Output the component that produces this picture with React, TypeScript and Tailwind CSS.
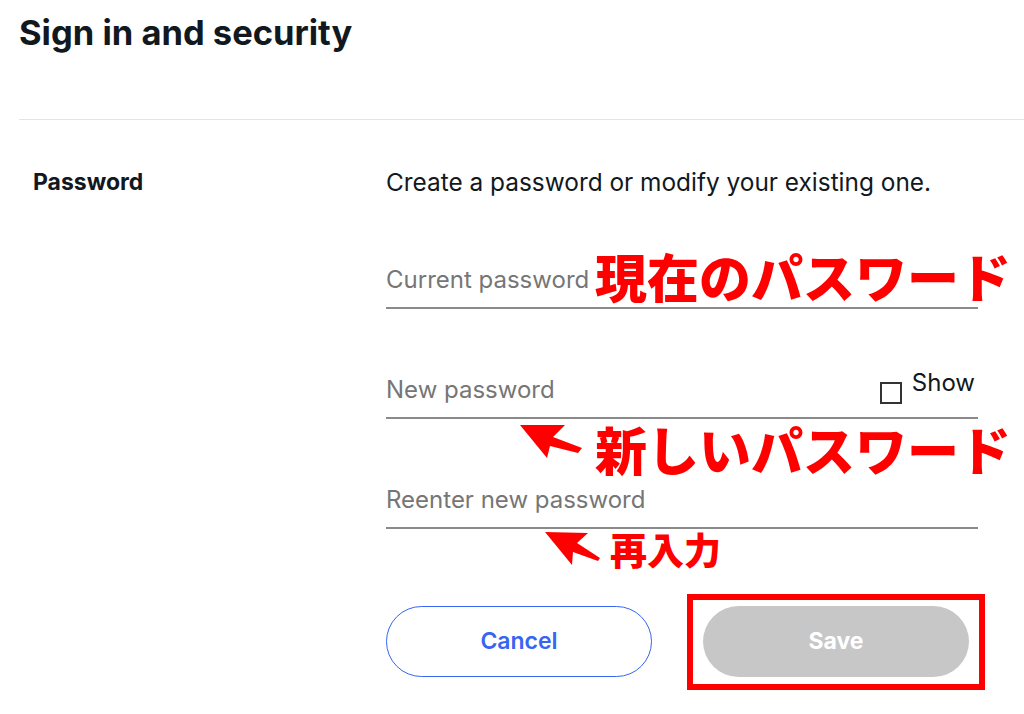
import React, { useState } from "react";

const UI_FONT = "font-['Inter','Liberation_Sans',sans-serif]";
const JP_FONT = "font-['Noto_Sans_CJK_JP','Noto_Sans',sans-serif]";

type FieldProps = {
  label: string;
  extra?: React.ReactNode;
};

const Field: React.FC<FieldProps> = ({ label, extra }) => (
  <div className="w-[592px] border-b-2 border-[#8a8a8a] pb-[13px]">
    <div className="flex items-start justify-between">
      <span className="text-[24px] leading-[28px] text-[#767676]">{label}</span>
      {extra}
    </div>
  </div>
);

// red arrow that points up and to the left
const Arrow: React.FC<{ className: string; points: string; w: number; h: number }> = ({
  className,
  points,
  w,
  h,
}) => (
  <svg className={className} width={w} height={h} viewBox={`0 0 ${w} ${h}`}>
    <polygon points={points} fill="#ff0000" />
  </svg>
);

const App: React.FC = () => {
  const [show, setShow] = useState(false);

  return (
    <div className={`relative w-[1024px] h-[714px] overflow-hidden bg-white ${UI_FONT}`}>
      <div className="pl-[19px] pt-[13px]">
        <h1 className="text-[34.5px] leading-[40px] font-bold text-[#111820]">Sign in and security</h1>
      </div>
      <div className="ml-[19px] mt-[66px] h-px bg-[#e5e5e5]" />

      <div className="mt-[48px] flex pl-[33px]">
        <div className="w-[353px] shrink-0">
          <h2 className="text-[23px] leading-[28px] font-bold text-[#111820]">Password</h2>
        </div>

        <div className="flex flex-col">
          <p className="text-[24.4px] leading-[28px] text-[#111820]">
            Create a password or modify your existing one.
          </p>

          <div className="mt-[70px] flex flex-col gap-[67px]">
            <Field label="Current password" />
            <Field
              label="New password"
              extra={
                <label className="flex items-start gap-[10px] pr-[3px]">
                  <span
                    onClick={() => setShow(!show)}
                    className="mt-[6px] h-[22px] w-[22px] border-2 border-[#333333] bg-white"
                  />
                  <span className="-mt-[7px] text-[24px] leading-[28px] text-[#111820]">Show</span>
                </label>
              }
            />
            <Field label="Reenter new password" />
          </div>

          <div className="mt-[77px] flex gap-[51px]">
            <button className="h-[71px] w-[266px] rounded-full border-[1.5px] border-[#3665f3] bg-white text-[23px] font-semibold text-[#3665f3]">
              Cancel
            </button>
            <div className="relative">
              <div className="absolute -left-[16px] -top-[12px] h-[96px] w-[298px] border-[6px] border-[#ff0000]" />
              <button
                disabled
                className="relative h-[71px] w-[266px] rounded-full bg-[#c7c7c7] text-[23px] font-bold text-white"
              >
                Save
              </button>
            </div>
          </div>
        </div>
      </div>

      {/* annotations */}
      <div className={`absolute left-[595px] top-[250px] text-[52px] leading-none font-black text-[#ff0000] ${JP_FONT}`}>
        現在のパスワード
      </div>
      <Arrow
        className="absolute left-[520px] top-[425px]"
        w={63}
        h={34}
        points="0,0 45,0 33,12 62,23 58,28 30,21 27,33"
      />
      <div className={`absolute left-[595px] top-[423px] text-[52px] leading-none font-black text-[#ff0000] ${JP_FONT}`}>
        新しいパスワード
      </div>
      <Arrow
        className="absolute left-[545px] top-[532px]"
        w={56}
        h={34}
        points="0,0 43,1 32,11 55,26 53,29 28,20 27,33"
      />
      <div className={`absolute left-[610px] top-[531px] text-[37px] leading-none font-black text-[#ff0000] ${JP_FONT}`}>
        再入力
      </div>
    </div>
  );
};

export default App;
